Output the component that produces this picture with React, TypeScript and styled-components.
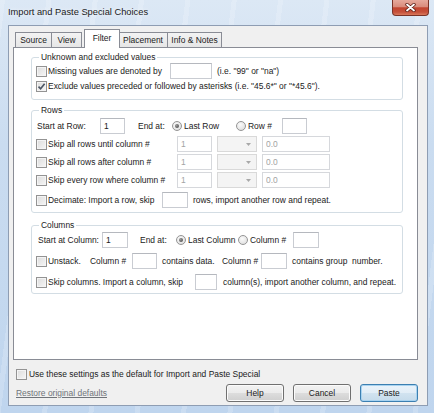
import styled, { createGlobalStyle } from "styled-components";

const GlobalStyle = createGlobalStyle`
  html, body {
    margin: 0;
    padding: 0;
  }
  body {
    font-family: "Liberation Sans", Arial, sans-serif;
    font-size: 8.45px;
    color: #1b1b1b;
  }
  * {
    box-sizing: border-box;
  }
`;

const Window = styled.div`
  width: 434px;
  height: 413px;
  display: flex;
  flex-direction: column;
  padding: 0 6px 7px 8px;
  overflow: hidden;
  background:
    repeating-linear-gradient(
      97deg,
      rgba(255, 255, 255, 0.18) 0 5px,
      rgba(255, 255, 255, 0) 5px 46px
    ),
    linear-gradient(180deg, #dce8f5 0%, #cadcf0 35%, #bfd5ee 100%);
`;

const TitleBar = styled.div`
  height: 25px;
  display: flex;
  align-items: flex-start;
  justify-content: space-between;
`;

const Title = styled.span`
  padding-top: 6px;
  font-size: 9.3px;
  line-height: 12px;
  color: #1a1a1a;
  text-shadow: 0 0 4px rgba(255, 255, 255, 0.9);
`;

const CloseButton = styled.div`
  width: 37px;
  height: 16px;
  margin-right: -1px;
  border: 1px solid #7a3327;
  border-top: none;
  border-radius: 0 0 4px 4px;
  display: flex;
  align-items: center;
  justify-content: center;
  background: linear-gradient(
    180deg,
    #e6a99c 0%,
    #d98c7c 45%,
    #c24530 52%,
    #c5503a 80%,
    #d9795c 100%
  );
`;

const Client = styled.div`
  flex: 1;
  display: flex;
  flex-direction: column;
  background: #f0f0f0;
  border: 1px solid #8e9db3;
  padding: 3px 9px 3px 4px;
`;

const TabStrip = styled.div`
  display: flex;
  align-items: flex-end;
  height: 19px;
  padding-left: 2px;
  margin-bottom: -1px;
`;

const Tab = styled.div<{ $w: number; $active?: boolean }>`
  width: ${(p) => p.$w}px;
  height: ${(p) => (p.$active ? 19 : 16)}px;
  margin-left: ${(p) => (p.$active ? 2 : -1)}px;
  margin-right: ${(p) => (p.$active ? -1 : 0)}px;
  border: 1px solid #898c95;
  border-bottom: ${(p) => (p.$active ? "none" : "1px solid #898c95")};
  background: ${(p) =>
    p.$active ? "#ffffff" : "linear-gradient(180deg, #f3f3f3 0%, #e6e6e6 100%)"};
  position: relative;
  z-index: ${(p) => (p.$active ? 2 : 1)};
  display: flex;
  justify-content: center;
  align-items: ${(p) => (p.$active ? "flex-start" : "center")};
  padding-top: ${(p) => (p.$active ? 2 : 0)}px;
  line-height: 13px;
  &:first-child {
    margin-left: 0;
  }
`;

const Panel = styled.div`
  flex: 1;
  background: #ffffff;
  border: 1px solid #898c95;
  padding: 3px 14px 0 17px;
`;

const Group = styled.fieldset<{ $mt?: number; $pt?: number; $pb?: number }>`
  margin: ${(p) => p.$mt ?? 0}px 0 0 0;
  padding: ${(p) => p.$pt ?? 0}px 4px ${(p) => p.$pb ?? 4}px 4px;
  border: 1px solid #d3dde4;
  border-radius: 3px;
  min-width: 0;
`;

const Legend = styled.legend`
  padding: 0 2px;
  margin-left: 3px;
  line-height: 12px;
`;

const Row = styled.div<{ $mt?: number; $h?: number }>`
  display: flex;
  align-items: center;
  height: ${(p) => p.$h ?? 16}px;
  margin-top: ${(p) => p.$mt ?? 0}px;
`;

const Label = styled.span<{ $w?: number; $ml?: number; $pl?: number }>`
  flex-shrink: 0;
  white-space: nowrap;
  width: ${(p) => (p.$w ? `${p.$w}px` : "auto")};
  margin-left: ${(p) => p.$ml ?? 0}px;
  padding-left: ${(p) => p.$pl ?? 0}px;
  line-height: 16px;
`;

const CheckBox = styled.span`
  flex-shrink: 0;
  width: 11px;
  height: 11px;
  margin-right: 1px;
  border: 1px solid #939393;
  background: linear-gradient(135deg, #dcdcdc 0%, #f6f6f6 100%);
  box-shadow: inset 0 0 0 1px #f4f4f4;
  display: flex;
  align-items: center;
  justify-content: center;
`;

const Radio = styled.span<{ $checked?: boolean }>`
  flex-shrink: 0;
  width: 10px;
  height: 10px;
  margin-right: 2px;
  border-radius: 50%;
  border: 1px solid #959595;
  background: radial-gradient(circle at 40% 35%, #fbfbfb 0%, #d9d9d9 100%);
  display: flex;
  align-items: center;
  justify-content: center;
  &::after {
    content: "";
    display: ${(p) => (p.$checked ? "block" : "none")};
    width: 4px;
    height: 4px;
    border-radius: 50%;
    background: radial-gradient(circle at 35% 35%, #9a9a9a 0%, #3f3f3f 100%);
  }
`;

const TextBox = styled.input<{ $w: number; $ml?: number }>`
  flex-shrink: 0;
  width: ${(p) => p.$w}px;
  height: 16px;
  margin: 0 0 0 ${(p) => p.$ml ?? 0}px;
  padding: 0 3px;
  border: 1px solid #c9ccd2;
  border-top-color: #b5b8be;
  background: #ffffff;
  font-family: inherit;
  font-size: 8.45px;
  color: #1b1b1b;
  outline: none;
  &:disabled {
    color: #a3a3a3;
    border-color: #d6d8dc;
  }
`;

const Select = styled.div<{ $w: number; $ml?: number }>`
  flex-shrink: 0;
  width: ${(p) => p.$w}px;
  height: 16px;
  margin-left: ${(p) => p.$ml ?? 0}px;
  border: 1px solid #d9d9d9;
  background: #f4f4f4;
  display: flex;
  align-items: center;
  justify-content: flex-end;
  padding-right: 5px;
`;

const Footer = styled.div`
  display: flex;
  flex-direction: column;
  padding-left: 3px;
`;

const FooterCheck = styled.div`
  display: flex;
  align-items: center;
  height: 12px;
  margin-top: 8px;
`;

const FooterBar = styled.div`
  display: flex;
  align-items: center;
  justify-content: space-between;
  margin-top: 4px;
`;

const RestoreLink = styled.span`
  color: #6f747a;
  text-decoration: underline;
  line-height: 14px;
`;

const Buttons = styled.div`
  display: flex;
  gap: 9px;
`;

const Button = styled.button<{ $default?: boolean }>`
  width: 58px;
  height: 18px;
  padding: 0;
  border: 1px solid ${(p) => (p.$default ? "#3c7fb1" : "#707070")};
  border-radius: 3px;
  font-family: inherit;
  font-size: 8.45px;
  color: #1b1b1b;
  background: ${(p) =>
    p.$default
      ? "linear-gradient(180deg, #eaf3fa 0%, #e2edf6 50%, #d2e3f0 50%, #c6dbeb 100%)"
      : "linear-gradient(180deg, #f2f2f2 0%, #ebebeb 50%, #dddddd 50%, #cfcfcf 100%)"};
  box-shadow: inset 0 0 0 1px ${(p) => (p.$default ? "#a8d3f0" : "#fbfbfb")};
`;

function Check({ checked }: { checked?: boolean }) {
  return (
    <CheckBox>
      {checked && (
        <svg width="9" height="9" viewBox="0 0 9 9">
          <path
            d="M1.5 4.6 L3.6 6.8 L7.6 1.8"
            fill="none"
            stroke="#4b5563"
            strokeWidth="1.6"
          />
        </svg>
      )}
    </CheckBox>
  );
}

function Arrow() {
  return (
    <svg width="5" height="3" viewBox="0 0 5 3">
      <path d="M0 0 L5 0 L2.5 3 Z" fill="#a8a8a8" />
    </svg>
  );
}

const skipRows = [
  "Skip all rows until column #",
  "Skip all rows after column #",
  "Skip every row where column #",
];

export default function App() {
  return (
    <>
      <GlobalStyle />
      <Window>
        <TitleBar>
          <Title>Import and Paste Special Choices</Title>
          <CloseButton>
            <svg width="11" height="9" viewBox="0 0 11 9">
              <path
                d="M2 1.5 L9 7.5 M9 1.5 L2 7.5"
                stroke="#5a1d14"
                strokeWidth="3.4"
                strokeLinecap="round"
              />
              <path
                d="M2 1.5 L9 7.5 M9 1.5 L2 7.5"
                stroke="#ffffff"
                strokeWidth="1.8"
                strokeLinecap="round"
              />
            </svg>
          </CloseButton>
        </TitleBar>
        <Client>
          <TabStrip>
            <Tab $w={37}>Source</Tab>
            <Tab $w={31}>View</Tab>
            <Tab $w={36} $active>
              Filter
            </Tab>
            <Tab $w={50}>Placement</Tab>
            <Tab $w={55}>Info &amp; Notes</Tab>
          </TabStrip>
          <Panel>
            <Group $pb={6}>
              <Legend>Unknown and excluded values</Legend>
              <Row>
                <Check />
                <Label $w={122}>Missing values are denoted by</Label>
                <TextBox $w={42} readOnly value="" />
                <Label $ml={5}>(i.e. "99" or "na")</Label>
              </Row>
              <Row $h={14}>
                <Check checked />
                <Label>
                  Exclude values preceded or followed by asterisks (i.e. "45.6*" or "*45.6").
                </Label>
              </Row>
            </Group>

            <Group $mt={4} $pt={2} $pb={4}>
              <Legend>Rows</Legend>
              <Row>
                <Label $w={64} $pl={1}>
                  Start at Row:
                </Label>
                <TextBox $w={25} readOnly value="1" />
                <Label $w={34} $ml={13}>
                  End at:
                </Label>
                <Radio $checked />
                <Label $w={52}>Last Row</Label>
                <Radio />
                <Label $w={34}>Row #</Label>
                <TextBox $w={25} readOnly value="" />
              </Row>
              {skipRows.map((text) => (
                <Row key={text} $mt={2}>
                  <Check />
                  <Label $w={129}>{text}</Label>
                  <TextBox $w={35} disabled value="1" readOnly />
                  <Select $w={40} $ml={5}>
                    <Arrow />
                  </Select>
                  <TextBox $w={68} $ml={5} disabled value="0.0" readOnly />
                </Row>
              ))}
              <Row $mt={4}>
                <Check />
                <Label $w={114}>Decimate: Import a row, skip</Label>
                <TextBox $w={26} readOnly value="" />
                <Label $ml={5}>rows, import another row and repeat.</Label>
              </Row>
            </Group>

            <Group $mt={6} $pt={1} $pb={3}>
              <Legend>Columns</Legend>
              <Row>
                <Label $w={66} $pl={2}>
                  Start at Column:
                </Label>
                <TextBox $w={26} readOnly value="1" />
                <Label $w={36} $ml={12}>
                  End at:
                </Label>
                <Radio $checked />
                <Label $w={50}>Last Column</Label>
                <Radio />
                <Label $w={43}>Column #</Label>
                <TextBox $w={26} readOnly value="" />
              </Row>
              <Row $mt={5}>
                <Check />
                <Label $w={42}>Unstack.</Label>
                <Label $w={42}>Column #</Label>
                <TextBox $w={25} readOnly value="" />
                <Label $w={60} $ml={5}>
                  contains data.
                </Label>
                <Label $w={39}>Column #</Label>
                <TextBox $w={26} readOnly value="" />
                <Label $ml={5}>contains group&nbsp; number.</Label>
              </Row>
              <Row $mt={5}>
                <Check />
                <Label $w={147}>Skip columns. Import a column, skip</Label>
                <TextBox $w={22} readOnly value="" />
                <Label $ml={6}>column(s), import another column, and repeat.</Label>
              </Row>
            </Group>
          </Panel>
          <Footer>
            <FooterCheck>
              <Check />
              <Label $ml={1}>
                Use these settings as the default for Import and Paste Special
              </Label>
            </FooterCheck>
            <FooterBar>
              <RestoreLink>Restore original defaults</RestoreLink>
              <Buttons>
                <Button>Help</Button>
                <Button>Cancel</Button>
                <Button $default>Paste</Button>
              </Buttons>
            </FooterBar>
          </Footer>
        </Client>
      </Window>
    </>
  );
}
